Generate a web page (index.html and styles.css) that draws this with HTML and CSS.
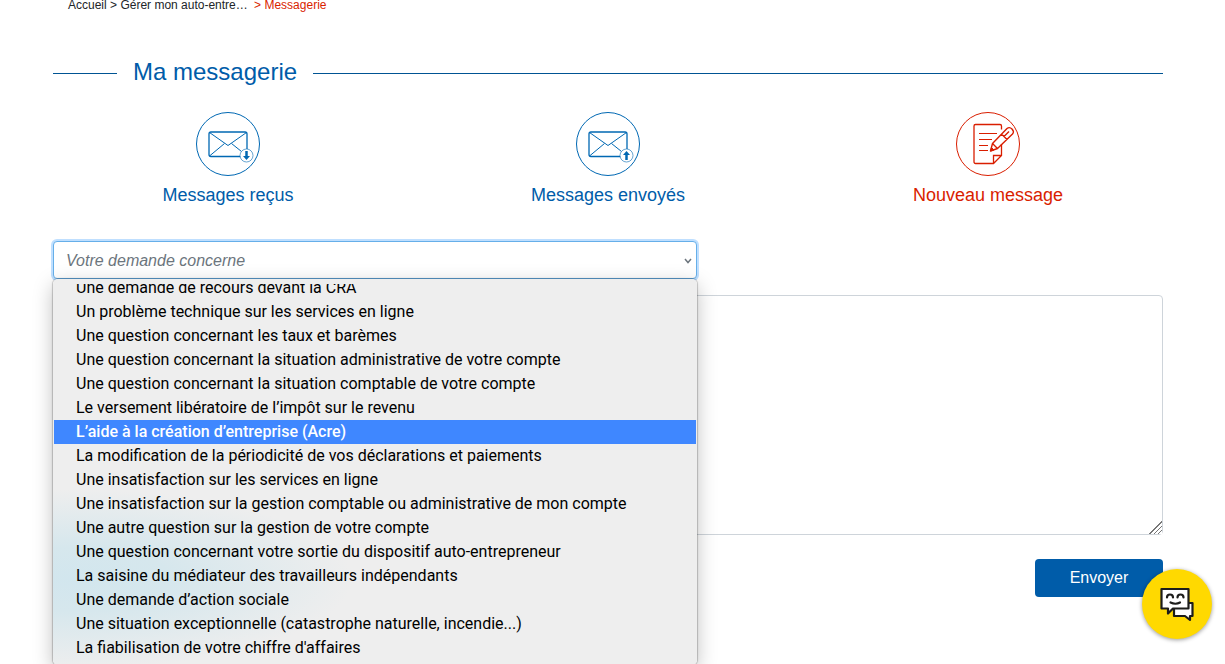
FILE: index.html
```html
<!DOCTYPE html>
<html lang="fr">
  <head>
    <meta charset="utf-8">
    <meta name="viewport" content="width=device-width, initial-scale=1">
    <title>Messagerie</title>
    <link rel="stylesheet" href="styles.css">
  </head>
  <body>
    <div class="container">
      <nav class="breadcrumb">
        <a href="#">Accueil</a> &gt; <a href="#">Gérer mon auto-entre…</a>
        <span class="current">&gt; Messagerie</span>
      </nav>

      <h1 class="title">Ma messagerie</h1>

      <div class="tabs">
        <a href="#" class="tab">
          <svg width="64" height="64" viewBox="0 0 64 64" fill="none" stroke="currentColor">
            <circle cx="32" cy="32" r="31.5"/>
            <path d="M46 44.500H15a2 2 0 0 1-2-2V22a2 2 0 0 1 2-2h34a2 2 0 0 1 2 2v15" stroke-width="1.3"/>
            <path d="M13.500 20.500 32 33.500 50.500 20.500M13.500 44 28.500 31.500M35.500 31.500 45.500 39.500"/>
            <circle cx="50.500" cy="43.500" r="6.500" fill="#fff" stroke-width=".6"/>
            <path d="M50.500 39v6" stroke-width="2.500"/>
            <path d="M47 44h7L50.500 48z" fill="currentColor" stroke="none"/>
          </svg>
          Messages reçus
        </a>
        <a href="#" class="tab">
          <svg width="64" height="64" viewBox="0 0 64 64" fill="none" stroke="currentColor">
            <circle cx="32" cy="32" r="31.5"/>
            <path d="M46 44.500H15a2 2 0 0 1-2-2V22a2 2 0 0 1 2-2h34a2 2 0 0 1 2 2v15" stroke-width="1.3"/>
            <path d="M13.500 20.500 32 33.500 50.500 20.500M13.500 44 28.500 31.500M35.500 31.500 45.500 39.500"/>
            <circle cx="50.500" cy="43.500" r="6.500" fill="#fff" stroke-width=".6"/>
            <path d="M50.500 42v6" stroke-width="2.500"/>
            <path d="M47 43h7L50.500 39z" fill="currentColor" stroke="none"/>
          </svg>
          Messages envoyés
        </a>
        <a href="#" class="tab active">
          <svg width="64" height="64" viewBox="0 0 64 64" fill="none" stroke="currentColor">
            <circle cx="32" cy="32" r="31.5"/>
            <path d="M45.500 17.500V14a1.500 1.500 0 0 0-1.500-1.500H19.500a1.500 1.500 0 0 0-1.500 1.500v36a1.500 1.500 0 0 0 1.500 1.500h18l8-8V32M37.500 51v-7.500h8" stroke-width="1.3"/>
            <path d="M23 21.500h18M23 27.500h13M23 33.500h9M23 38.500h9" stroke-width="1.200"/>
            <path d="M34.500 39 36.500 31.500 51 16.500q2.500-2 5 .5t.5 5L41.500 36.500zM36.500 31.500l5 5M45.500 22l5.500 5.500M48 24.500l5-5" stroke-width="1.400" stroke-linejoin="round"/>
            <path d="M34.500 39l1-3.500 2.500 2.500z" fill="currentColor"/>
          </svg>
          Nouveau message
        </a>
      </div>

      <form class="form">
        <div class="select-wrap">
          <select class="subject" aria-label="Votre demande concerne">
            <option>Votre demande concerne</option>
          </select>
          <svg class="chevron" width="8" height="6" viewBox="0 0 8 6" fill="none" stroke="#6c757d" stroke-width="1.500">
            <path d="M1 1l3 3.500L7 1"/>
          </svg>
          <div class="menu">
            <ul class="menu-list" role="listbox" aria-label="Votre demande concerne">
              <li role="option">Une demande de recours devant la CRA</li>
              <li role="option">Un problème technique sur les services en ligne</li>
              <li role="option">Une question concernant les taux et barèmes</li>
              <li role="option">Une question concernant la situation administrative de votre compte</li>
              <li role="option">Une question concernant la situation comptable de votre compte</li>
              <li role="option">Le versement libératoire de l’impôt sur le revenu</li>
              <li role="option" aria-selected="true" class="selected">L’aide à la création d’entreprise (Acre)</li>
              <li role="option">La modification de la périodicité de vos déclarations et paiements</li>
              <li role="option">Une insatisfaction sur les services en ligne</li>
              <li role="option">Une insatisfaction sur la gestion comptable ou administrative de mon compte</li>
              <li role="option">Une autre question sur la gestion de votre compte</li>
              <li role="option">Une question concernant votre sortie du dispositif auto-entrepreneur</li>
              <li role="option">La saisine du médiateur des travailleurs indépendants</li>
              <li role="option">Une demande d’action sociale</li>
              <li role="option">Une situation exceptionnelle (catastrophe naturelle, incendie...)</li>
              <li role="option">La fiabilisation de votre chiffre d'affaires</li>
            </ul>
          </div>
        </div>

        <textarea class="message" aria-label="Message"></textarea>
        <button type="submit" class="send">Envoyer</button>
      </form>
    </div>

    <button type="button" class="chat" aria-label="Discuter">
      <svg width="36" height="36" viewBox="0 0 36 36" fill="#fff" stroke="#1d1d1b" stroke-width="2.200" stroke-linejoin="round" stroke-linecap="round">
        <path d="M15 17h18.500v13H31v4l-5-4H15z"/>
        <path d="M2.500 3h27v19.500H14l-5 5v-5H2.500z"/>
        <path d="M8 11.500q0-3 3-3t3 3M18.500 11.500q0-3 3-3t3 3M11.500 16.500q5 2.500 9.500 0" fill="none"/>
      </svg>
    </button>
  </body>
</html>
```

FILE: styles.css
```css
* {
  box-sizing: border-box;
}

body {
  margin: 0;
  padding: 0 24px 0 15px;
  min-height: 100vh;
  overflow: hidden;
  background: #fff;
  color: #212529;
  font-family: "Liberation Sans", Arial, sans-serif;
  font-size: 16px;
}

a {
  color: inherit;
  text-decoration: none;
}

.container {
  max-width: 1110px;
  margin: 0 auto;
}

.breadcrumb {
  padding-left: 15px;
  font-size: 12px;
  line-height: 10px;
}

.breadcrumb .current {
  margin-left: 3px;
  color: #d91e00;
}

/* Title with a rule on both sides */
.title {
  display: flex;
  align-items: center;
  gap: 16px;
  margin: 48px 0 26px;
  color: #005ca9;
  font-size: 24px;
  font-weight: 400;
  line-height: 28px;
}

.title::before,
.title::after {
  content: "";
  width: 64px;
  height: 1px;
  margin-top: 2px;
  background: #005493;
}

.title::after {
  flex: 1;
}

.tabs {
  display: grid;
  grid-template-columns: repeat(3, 1fr);
  margin: 0 -15px 35px;
}

.tab {
  display: flex;
  flex-direction: column;
  align-items: center;
  gap: 8px;
  color: #005ca9;
  font-size: 18px;
  line-height: 22px;
}

.tab svg {
  color: #0068b3;
}

.tab.active,
.tab.active svg {
  color: #d91e00;
}

.form {
  display: flex;
  flex-direction: column;
}

.select-wrap {
  position: relative;
  width: 58%;
  margin-bottom: 16px;
}

.subject {
  display: block;
  width: 100%;
  height: 38px;
  padding: 0 12px;
  appearance: none;
  background: #fff;
  border: 1px solid #66afe9;
  border-radius: 4px;
  box-shadow: 0 0 0 2px #bfdfff;
  color: #6c757d;
  font: italic 16px "Liberation Sans", Arial, sans-serif;
  outline: none;
}

.chevron {
  position: absolute;
  top: 17px;
  right: 5px;
  pointer-events: none;
}

.menu {
  position: absolute;
  top: 100%;
  left: 0;
  right: 0;
  z-index: 2;
  padding: 5px 1px;
  background: radial-gradient(ellipse 280px 90px at 20px 300px, #d2e6ee 0%, #d6e7ed 35%, #eee 100%);
  border-radius: 5px;
  box-shadow: 0 0 1px 1px rgba(0, 0, 0, 0.2), 0 6px 20px rgba(0, 0, 0, 0.25);
}

/* List is scrolled to its end */
.menu-list {
  display: flex;
  flex-direction: column;
  justify-content: flex-end;
  height: 376px;
  margin: 0;
  padding: 0;
  overflow: hidden;
  list-style: none;
  color: #000;
  font-family: Roboto, sans-serif;
  font-size: 16px;
  line-height: 24px;
}

.menu-list li {
  flex-shrink: 0;
  padding: 0 22px;
  white-space: nowrap;
}

.menu-list .selected {
  background: #3f87ff;
  color: #fff;
  font-weight: 500;
}

.message {
  width: 100%;
  height: 240px;
  margin-bottom: 24px;
  padding: 6px 12px;
  border: 1px solid #ced4da;
  border-radius: 4px;
  font: inherit;
  resize: vertical;
}

.message::-webkit-resizer {
  background: linear-gradient(135deg, #fff 50%, transparent 50%),
    repeating-linear-gradient(135deg, #777 0 1px, #fff 1px 3px);
}

.send {
  align-self: flex-end;
  width: 128px;
  height: 38px;
  background: #005ca9;
  border: none;
  border-radius: 4px;
  color: #fff;
  font: inherit;
  cursor: pointer;
}

.chat {
  position: fixed;
  right: 13px;
  bottom: 25px;
  z-index: 3;
  display: flex;
  align-items: center;
  justify-content: center;
  width: 70px;
  height: 70px;
  padding: 0;
  background: #ffd900;
  border: none;
  border-radius: 50%;
  box-shadow: 0 1px 4px rgba(0, 0, 0, 0.4);
  cursor: pointer;
}
```
